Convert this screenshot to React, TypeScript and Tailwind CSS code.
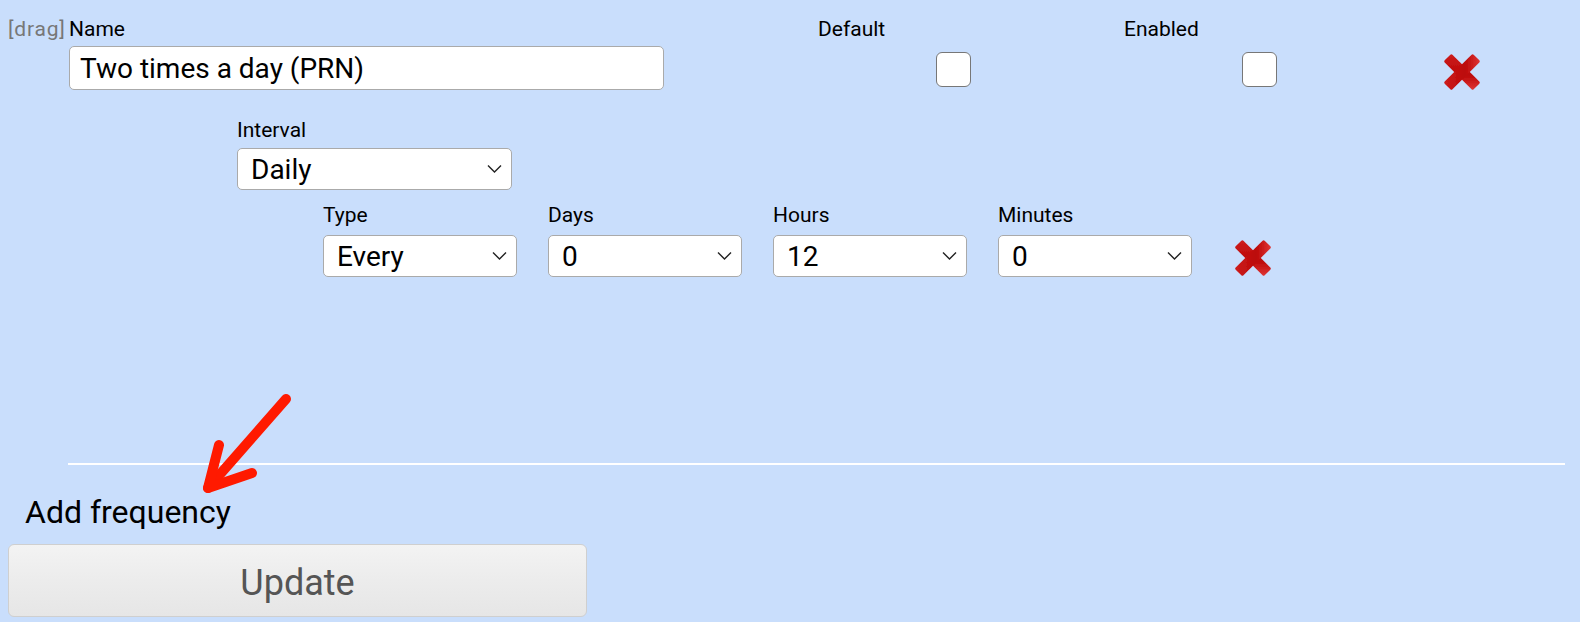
import React from 'react';

const font = { fontFamily: 'Roboto, "Liberation Sans", sans-serif' };

function Chevron() {
  return (
    <svg width="15" height="9" viewBox="0 0 15 9" className="pointer-events-none absolute right-[10px] top-1/2 -translate-y-1/2">
      <path d="M1 1 L7.5 7.5 L14 1" fill="none" stroke="#222" strokeWidth="1.4" />
    </svg>
  );
}

function Select({ value, width }: { value: string; width: string }) {
  return (
    <div className={`relative ${width}`}>
      <select
        defaultValue={value}
        className="h-[42px] w-full appearance-none rounded-[5px] border border-[#aaa] bg-white pl-[13px] text-[28px] text-black outline-none"
      >
        <option>{value}</option>
      </select>
      <Chevron />
    </div>
  );
}

function RedX({ id }: { id: string }) {
  return (
    <svg width="44" height="44" viewBox="0 0 44 44">
      <defs>
        <linearGradient id={id} x1="0" y1="0" x2="44" y2="44" gradientUnits="userSpaceOnUse">
          <stop offset="0" stopColor="#d82a2a" />
          <stop offset="0.55" stopColor="#bb0808" />
          <stop offset="1" stopColor="#ff5e5e" />
        </linearGradient>
        <filter id={id + 'b'}>
          <feGaussianBlur stdDeviation="0.6" />
        </filter>
      </defs>
      <g filter={`url(#${id}b)`} fill={`url(#${id})`}>
        <rect x="1.5" y="16.5" width="41" height="11" rx="1.5" transform="rotate(45 22 22)" />
        <rect x="1.5" y="16.5" width="41" height="11" rx="1.5" transform="rotate(-45 22 22)" />
      </g>
    </svg>
  );
}

function Checkbox() {
  return <input type="checkbox" className="h-[35px] w-[35px] appearance-none rounded-[6px] border-[1.5px] border-[#777] bg-white" />;
}

export default function App() {
  return (
    <div className="relative h-[622px] w-full overflow-hidden bg-[#c9defc] text-black" style={font}>
      {/* top row */}
      <div className="flex items-start pl-2 pt-[17px]">
        <span className="w-[61px] text-[21px] leading-[25px] tracking-[0.8px] text-[#777]">[drag]</span>
        <div className="w-[749px]">
          <div className="text-[21px] leading-[25px]">Name</div>
          <input
            defaultValue="Two times a day (PRN)"
            className="mt-[4px] h-[44px] w-[595px] rounded-[5px] border border-[#aaa] bg-white px-[10px] text-[28px] outline-none"
          />
        </div>
        <div className="w-[306px]">
          <div className="text-[21px] leading-[25px]">Default</div>
          <div className="mt-[10px] ml-[118px] flex"><Checkbox /></div>
        </div>
        <div className="w-[316px]">
          <div className="text-[21px] leading-[25px]">Enabled</div>
          <div className="mt-[10px] ml-[118px] flex"><Checkbox /></div>
        </div>
        <div className="mt-[33px]"><RedX id="x1" /></div>
      </div>

      {/* interval */}
      <div className="ml-[237px] mt-[24px]">
        <div className="text-[21px] leading-[25px]">Interval</div>
        <div className="mt-[5px]"><Select value="Daily" width="w-[275px]" /></div>
      </div>

      {/* frequency details */}
      <div className="ml-[323px] mt-[13px] flex items-start gap-[31px]">
        {[
          ['Type', 'Every'],
          ['Days', '0'],
          ['Hours', '12'],
          ['Minutes', '0'],
        ].map(([label, value]) => (
          <div key={label}>
            <div className="text-[21px] leading-[25px]">{label}</div>
            <div className="mt-[7px]"><Select value={value} width="w-[194px]" /></div>
          </div>
        ))}
        <div className="mt-[33px] ml-[8px]"><RedX id="x2" /></div>
      </div>

      <div className="ml-[68px] mr-[15px] mt-[183px] h-[2px] bg-white" />

      <div className="ml-[25px] mt-[29px] text-[32px] leading-[36px]">Add frequency</div>

      <button className="ml-2 mt-[14px] h-[73px] w-[579px] rounded-[6px] border border-[#cfcfcf] bg-gradient-to-b from-[#f3f3f3] via-[#ececec] to-[#e6e6e6] pt-[4px] text-[36px] text-[#555]">
        Update
      </button>

      {/* annotation arrow */}
      <svg className="pointer-events-none absolute left-0 top-0" width="400" height="622">
        <g stroke="#ff1a00" strokeWidth="10" strokeLinecap="round" strokeLinejoin="round" fill="none">
          <path d="M286 399 L208 488" />
          <path d="M219 445 L208 488 L252 473" />
        </g>
      </svg>
    </div>
  );
}
